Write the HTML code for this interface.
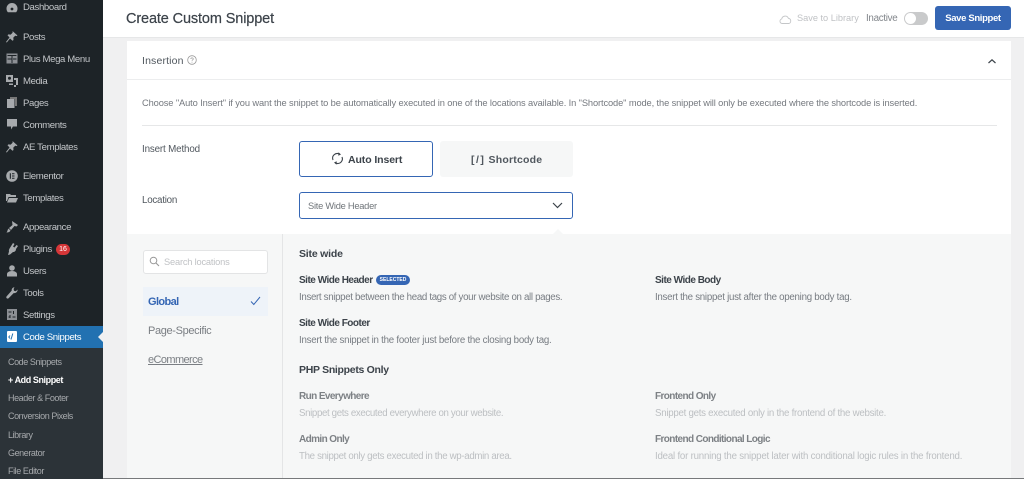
<!DOCTYPE html>
<html><head><meta charset="utf-8"><style>
*{box-sizing:border-box}
html,body{margin:0;padding:0;width:1024px;height:479px;overflow:hidden;background:#f0f0f1;font-family:"Liberation Sans",sans-serif}
.t{position:absolute;white-space:nowrap;line-height:14px;font-size:10px}
.a{position:absolute}
.m{color:#c3c6c9;left:23px;font-size:9.6px;letter-spacing:-.37px}
.s{color:#a7aaad;left:8px;font-size:9px;letter-spacing:-.42px}
.h{font-weight:bold;color:#3c434a;font-size:10px;letter-spacing:-.5px}
.d{color:#777c82;font-size:9.7px}
.hd{font-weight:bold;color:#7d8185;font-size:10px;letter-spacing:-.6px}
.dd{color:#bcbfc2;font-size:9.7px}
svg{position:absolute;display:block}
</style></head><body>
<div class="a" style="left:0;top:0;width:103px;height:479px;background:#1d2327"></div>
<div class="a" style="left:0;top:326px;width:103px;height:153px;background:#2c3338"></div>
<div class="a" style="left:0;top:326px;width:103px;height:22px;background:#2271b1"></div>
<div class="a" style="left:98px;top:332px;width:0;height:0;border:5px solid transparent;border-right-color:#f0f0f1;border-left:0"></div>

<svg style="left:6px;top:2px" width="12" height="11" viewBox="0 0 12 11"><path d="M6 1a5.500 5.500 0 0 0-5.500 5.500c0 1.500.5 2.800 1.400 3.700h8.200c.9-.9 1.400-2.200 1.400-3.700A5.500 5.500 0 0 0 6 1z" fill="#a7aaad"/><circle cx="6" cy="7" r="1.400" fill="#1d2327"/></svg>
<div class="t m" style="top:1px">Dashboard</div>
<svg style="left:6px;top:31px" width="12" height="12" viewBox="0 0 12 12"><path d="M7 .5l4.500 4-1.200.6-1-.5-2 2 .2 2.400-1 .8L4 7.500.8 11.500 0 11l3.500-4.500-2-2.200.9-.9 2.300.2 2-2-.4-1z" fill="#a7aaad"/></svg>
<div class="t m" style="top:31px">Posts</div>
<svg style="left:6px;top:53px" width="12" height="11" viewBox="0 0 12 11"><path d="M.5.5h11v10H.5z" fill="#8c8f94"/><path d="M1.500 2.500h9M1.500 6h4M7 6h3.500M6 3v7" stroke="#1d2327"/></svg>
<div class="t m" style="top:53px">Plus Mega Menu</div>
<svg style="left:6px;top:75px" width="12" height="12" viewBox="0 0 12 12"><path d="M0 0h7v7H0z" fill="#a7aaad"/><circle cx="3.500" cy="3.200" r="1.500" fill="#1d2327"/><path d="M8 3h4v7h-2v-5H8zM3 8.500h4V10H3zM8 10h2v2H8z" fill="#a7aaad"/></svg>
<div class="t m" style="top:75px">Media</div>
<svg style="left:7px;top:97px" width="10" height="11" viewBox="0 0 10 11"><path d="M3 0h7v9H8V2H3z" fill="#777"/><path d="M0 2h7.500v9H0z" fill="#a7aaad"/></svg>
<div class="t m" style="top:97px">Pages</div>
<svg style="left:7px;top:119px" width="10" height="11" viewBox="0 0 10 11"><path d="M0 0h10v7.500H6l-2 3v-3H0z" fill="#a7aaad"/></svg>
<div class="t m" style="top:119px">Comments</div>
<svg style="left:6px;top:141px" width="12" height="12" viewBox="0 0 12 12"><path d="M7 .5l4.500 4-1.200.6-1-.5-2 2 .2 2.400-1 .8L4 7.500.8 11.500 0 11l3.500-4.500-2-2.200.9-.9 2.300.2 2-2-.4-1z" fill="#a7aaad"/></svg>
<div class="t m" style="top:141px">AE Templates</div>
<svg style="left:6px;top:170px" width="12" height="12" viewBox="0 0 12 12"><circle cx="6" cy="6" r="5.800" fill="#a7aaad"/><path d="M3.800 3.200h1.100v5.600H3.800zM6 3.200h2.500v1.100H6zM6 5.450h2.500v1.100H6zM6 7.700h2.500v1.100H6z" fill="#1d2327"/></svg>
<div class="t m" style="top:170px">Elementor</div>
<svg style="left:6px;top:193px" width="12" height="10" viewBox="0 0 12 10"><path d="M0 1h4l1 1h5v2H2.500L1 8H0z" fill="#a7aaad"/><path d="M3 5h9l-2 4.500H1z" fill="#a7aaad"/></svg>
<div class="t m" style="top:192px">Templates</div>
<svg style="left:6px;top:221px" width="12" height="12" viewBox="0 0 12 12"><path d="M6 0l6 4-1.500 1.500-2-.5L5 9 3 7l3.500-3zM2.500 7.500l2 2C4 11 2 11.500.5 11.500 1.500 10.500 1.500 8.500 2.500 7.500z" fill="#a7aaad"/></svg>
<div class="t m" style="top:221px">Appearance</div>
<svg style="left:7px;top:243px" width="11" height="12" viewBox="0 0 11 12"><path d="M6 0l1.500 1L6 3.500 7.500 4.500 9.500 2 11 3 9 6c0 2-1.500 3-3 3L3 11.500 1 12l1-3.500C1.500 6.500 3 5 3.500 4z" fill="#a7aaad"/></svg>
<div class="t m" style="top:243px">Plugins</div>
<div class="a" style="left:56px;top:244px;width:14px;height:11px;border-radius:6px;background:#d63638;color:#fff;font-size:7px;line-height:11px;text-align:center">16</div>
<svg style="left:7px;top:265px" width="10" height="12" viewBox="0 0 10 12"><circle cx="5" cy="3" r="2.800" fill="#a7aaad"/><path d="M0 11.500V9c0-1.500 2-3 5-3s5 1.500 5 3v2.500z" fill="#a7aaad"/></svg>
<div class="t m" style="top:265px">Users</div>
<svg style="left:6px;top:287px" width="12" height="12" viewBox="0 0 12 12"><path d="M8.500.3c-1.800 0-3 1.500-2.800 3.300L.7 9.200c-.6.700-.5 1.500 0 2 .6.500 1.400.5 2-.1L7.800 6c2 .5 3.900-1.200 3.800-3.500L9.800 4.200 8 3.700 7.600 2z" fill="#a7aaad"/></svg>
<div class="t m" style="top:287px">Tools</div>
<svg style="left:7px;top:309px" width="10" height="11" viewBox="0 0 10 11"><path d="M0 0h10v11H0z" fill="#8c8f94"/><path d="M1.500 3h3M6.500 2v3M1.500 8h2M5.500 8h3M3 6v3" stroke="#1d2327"/></svg>
<div class="t m" style="top:309px">Settings</div>
<div class="a" style="left:7px;top:331px;width:10px;height:11px;background:#fff;border-radius:1px"></div>
<svg style="left:7px;top:331px" width="10" height="11" viewBox="0 0 10 11"><path d="M5.800 2.500 4 8.500M3 4.500 1.800 6 3 7.500" stroke="#2271b1" fill="none"/></svg>
<div class="t m" style="top:331px;color:#fff">Code Snippets</div>
<div class="t s" style="top:355px">Code Snippets</div>
<div class="t s" style="top:373px;color:#fff;font-weight:bold">+ Add Snippet</div>
<div class="t s" style="top:391px">Header &amp; Footer</div>
<div class="t s" style="top:409px">Conversion Pixels</div>
<div class="t s" style="top:428px">Library</div>
<div class="t s" style="top:446px">Generator</div>
<div class="t s" style="top:464px">File Editor</div>

<div class="a" style="left:103px;top:0;width:921px;height:38px;background:#fff;border-bottom:1px solid #e6e7e8"></div>
<div class="t" style="left:126px;top:10px;font-size:14.500px;line-height:18px;color:#3c434a;letter-spacing:-.13px;-webkit-text-stroke:.2px #3c434a">Create Custom Snippet</div>
<svg style="left:779px;top:15px" width="13" height="9" viewBox="0 0 13 9"><path d="M3 8.500a2.300 2.300 0 0 1-.3-4.500 3.500 3.500 0 0 1 6.700-.7A2.700 2.700 0 0 1 10 8.500z" fill="none" stroke="#c4c6c8" stroke-width=".9"/></svg>
<div class="t" style="left:797px;top:11px;font-size:9.200px;color:#c0c2c5">Save to Library</div>
<div class="t" style="left:866px;top:12px;font-size:9.800px;color:#82868b;letter-spacing:-.3px">Inactive</div>
<div class="a" style="left:904px;top:12px;width:24px;height:13px;border-radius:7px;background:#c9cacb"></div>
<div class="a" style="left:905px;top:13px;width:11px;height:11px;border-radius:50%;background:#fff"></div>
<div class="a" style="left:935px;top:6px;width:76px;height:24px;border-radius:3px;background:#3566b4;color:#fff;font-weight:bold;font-size:9.500px;line-height:25px;text-align:center;letter-spacing:-.35px">Save Snippet</div>

<div class="a" style="left:127px;top:41px;width:884px;height:438px;background:#fff"></div>
<div class="a" style="left:127px;top:79px;width:884px;height:1px;background:#ecedee"></div>
<div class="t" style="left:142px;top:54px;font-size:10.500px;color:#50575e;letter-spacing:.15px">Insertion</div>
<svg style="left:187px;top:55px" width="10" height="10" viewBox="0 0 10 10"><circle cx="5" cy="5" r="4.300" fill="none" stroke="#999" stroke-width=".8"/><path d="M3.800 4c0-1.500 2.500-1.500 2.500 0 0 .8-1.300.9-1.300 1.800M5 6.800v.8" fill="none" stroke="#999" stroke-width=".7"/></svg>
<svg style="left:987px;top:58px" width="10" height="7" viewBox="0 0 10 7"><path d="M1.500 5 5 1.800 8.500 5" fill="none" stroke="#3c434a" stroke-width="1.200"/></svg>
<div class="t" style="left:142px;top:96px;font-size:9.300px;color:#75797f;letter-spacing:-.115px">Choose "Auto Insert" if you want the snippet to be automatically executed in one of the locations available. In "Shortcode" mode, the snippet will only be executed where the shortcode is inserted.</div>
<div class="a" style="left:142px;top:125px;width:855px;height:1px;background:#e6e7e8"></div>
<div class="t" style="left:142px;top:143px;font-size:9.800px;color:#50575e;letter-spacing:-.15px">Insert Method</div>
<div class="a" style="left:299px;top:141px;width:134px;height:36px;border:1.500px solid #3566b4;border-radius:3px;background:#fff"></div>
<svg style="left:331px;top:152px" width="13" height="13" viewBox="0 0 13 13"><path d="M2 8A4.700 4.700 0 0 1 8 1.800M11 5A4.700 4.700 0 0 1 5 11.200" fill="none" stroke="#3c434a" stroke-width="1.100"/><path d="M7.500.2 10 2.500 7.300 3.700zM5.500 12.800 3 10.500l2.700-1.200z" fill="#3c434a"/></svg>
<div class="t" style="left:348px;top:153px;font-size:10.500px;font-weight:bold;color:#3c434a;letter-spacing:-.1px">Auto Insert</div>
<div class="a" style="left:440px;top:141px;width:133px;height:36px;border-radius:3px;background:#f6f7f7"></div>
<div class="t" style="left:471px;top:153px;font-size:10.500px;font-weight:bold;color:#50575e;letter-spacing:.2px"><span style="letter-spacing:1.500px">[/]</span> Shortcode</div>
<div class="t" style="left:142px;top:194px;font-size:9.800px;color:#50575e;letter-spacing:-.25px">Location</div>
<div class="a" style="left:299px;top:192px;width:274px;height:27px;border:1px solid #3566b4;border-radius:3px;background:#fff"></div>
<div class="t" style="left:308px;top:199px;font-size:9.300px;color:#70757a;letter-spacing:-.25px">Site Wide Header</div>
<svg style="left:552px;top:202px" width="11" height="7" viewBox="0 0 11 7"><path d="M1 1l4.500 4.500L10 1" fill="none" stroke="#3c434a" stroke-width="1.200"/></svg>

<div class="a" style="left:127px;top:234px;width:884px;height:245px;background:#f6f7f7"></div>
<div class="a" style="left:552px;top:229px;width:0;height:0;border:6px solid transparent;border-bottom-color:#f6f7f7;border-top:0"></div>
<div class="a" style="left:282px;top:234px;width:1px;height:245px;background:#e4e5e6"></div>
<div class="a" style="left:143px;top:250px;width:125px;height:24px;background:#fff;border:1px solid #e3e4e5;border-radius:3px"></div>
<svg style="left:149px;top:256px" width="11" height="11" viewBox="0 0 11 11"><circle cx="4.500" cy="4.500" r="3.300" fill="none" stroke="#999" stroke-width="1"/><path d="M7 7l3 3" stroke="#999" stroke-width="1.100"/></svg>
<div class="t" style="left:164px;top:255px;font-size:9.300px;color:#c0c2c5;letter-spacing:-.2px">Search locations</div>
<div class="a" style="left:143px;top:287px;width:125px;height:29px;background:#eef3f9"></div>
<div class="t" style="left:148px;top:295px;font-size:11px;font-weight:bold;color:#3566b4;letter-spacing:-.6px">Global</div>
<svg style="left:250px;top:296px" width="11" height="10" viewBox="0 0 11 10"><path d="M1 5.500 3.800 8.500 10 1" fill="none" stroke="#3566b4" stroke-width="1"/></svg>
<div class="t" style="left:148px;top:324px;font-size:11px;color:#7a7e83;letter-spacing:-.35px">Page-Specific</div>
<div class="t" style="left:148px;top:353px;font-size:11px;color:#7a7e83;letter-spacing:-.6px;text-decoration:underline">eCommerce</div>

<div class="t" style="left:299px;top:247px;font-size:10.500px;font-weight:bold;color:#3c434a;letter-spacing:-.2px">Site wide</div>
<div class="t h" style="left:299px;top:274px">Site Wide Header</div>
<div class="a" style="left:376px;top:275px;width:34px;height:10px;border-radius:5px;background:#3566b4;color:#fff;font-size:5px;font-weight:bold;line-height:10px;text-align:center">SELECTED</div>
<div class="t d" style="left:299px;top:291px;letter-spacing:-.32px">Insert snippet between the head tags of your website on all pages.</div>
<div class="t h" style="left:655px;top:274px">Site Wide Body</div>
<div class="t d" style="left:655px;top:291px;letter-spacing:-.26px">Insert the snippet just after the opening body tag.</div>
<div class="t h" style="left:299px;top:317px">Site Wide Footer</div>
<div class="t d" style="left:299px;top:334px;letter-spacing:-.23px">Insert the snippet in the footer just before the closing body tag.</div>
<div class="t" style="left:299px;top:363px;font-size:10.500px;font-weight:bold;color:#3c434a;letter-spacing:-.3px">PHP Snippets Only</div>
<div class="t hd" style="left:299px;top:390px">Run Everywhere</div>
<div class="t dd" style="left:299px;top:407px;letter-spacing:-.36px">Snippet gets executed everywhere on your website.</div>
<div class="t hd" style="left:655px;top:390px">Frontend Only</div>
<div class="t dd" style="left:655px;top:407px;letter-spacing:-.26px">Snippet gets executed only in the frontend of the website.</div>
<div class="t hd" style="left:299px;top:433px">Admin Only</div>
<div class="t dd" style="left:299px;top:450px;letter-spacing:-.33px">The snippet only gets executed in the wp-admin area.</div>
<div class="t hd" style="left:655px;top:433px">Frontend Conditional Logic</div>
<div class="t dd" style="left:655px;top:450px;letter-spacing:-.21px">Ideal for running the snippet later with conditional logic rules in the frontend.</div>
<div class="a" style="left:103px;top:478px;width:921px;height:1px;background:#77797b"></div>
</body></html>
